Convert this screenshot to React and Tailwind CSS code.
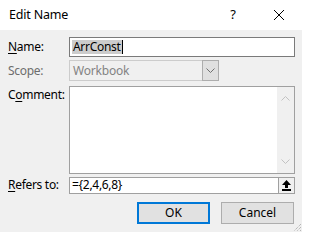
import React from "react";

const font = { fontFamily: '"Noto Sans", "Liberation Sans", sans-serif' };

const Chevron = ({ up, className }) => (
  <svg width="9" height="5" viewBox="0 0 9 5" className={className}>
    <path
      d={up ? "M0.5 4.5 L4.5 0.5 L8.5 4.5" : "M0.5 0.5 L4.5 4.5 L8.5 0.5"}
      fill="none"
      stroke="currentColor"
      strokeWidth="1"
    />
  </svg>
);

const RefArrow = () => (
  <svg width="9" height="11" viewBox="0 0 9 11">
    <path d="M4.5 0 L9 5 L6 5 L6 8 L3 8 L3 5 L0 5 Z" fill="#000" />
    <rect x="0" y="9" width="9" height="2" fill="#000" />
  </svg>
);

const Label = ({ pre, u, post, disabled }) => (
  <div
    className={`w-[69px] shrink-0 pl-[8px] whitespace-nowrap text-[12px] tracking-[-0.3px] ${
      disabled ? "text-[#6d6d6d]" : "text-black"
    }`}
  >
    {pre}
    {u && <span className="underline underline-offset-2">{u}</span>}
    {post}
  </div>
);

export default function App() {
  return (
    <div className="w-[302px] h-[232px] bg-[#f0f0f0] flex flex-col overflow-hidden relative" style={font}>
      {/* title bar */}
      <div className="h-[30px] bg-white flex items-center shrink-0">
        <div className="pl-[9px] text-[12.5px] tracking-[-0.2px] text-black flex-1">Edit Name</div>
        <div className="w-[46px] text-center text-[13px] text-black">?</div>
        <div className="w-[46px] flex justify-center">
          <svg width="10" height="10" viewBox="0 0 10 10">
            <path d="M0 0 L10 10 M10 0 L0 10" stroke="#000" strokeWidth="1" />
          </svg>
        </div>
      </div>

      {/* Name */}
      <div className="flex items-center mt-[7px]">
        <Label u="N" post="ame:" />
        <div className="w-[226px] h-[20px] bg-white border border-[#7a7a7a] flex items-center pl-[2px]">
          <span className="bg-[#cccccc] text-[12px] tracking-[-0.3px] text-black leading-[14px] px-px">ArrConst</span>
          <span className="w-px h-[14px] bg-black" />
        </div>
      </div>

      {/* Scope */}
      <div className="flex items-center mt-[3px]">
        <Label pre="Scope:" disabled />
        <div className="w-[150px] h-[21px] bg-[#f0f0f0] border border-[#cccccc] flex items-center">
          <span className="flex-1 pl-[3px] text-[12px] tracking-[-0.2px] text-[#838383]">Workbook</span>
          <div className="w-[17px] h-[21px] -mr-px -my-px bg-[#e0e0e0] border border-[#adadad] flex items-center justify-center text-[#707070]">
            <Chevron />
          </div>
        </div>
      </div>

      {/* Comment */}
      <div className="flex items-start mt-[5px]">
        <Label pre="C" u="o" post="mment:" />
        <div className="w-[226px] h-[88px] bg-white border border-[#a0a0a0] flex justify-end">
          <div className="w-[17px] h-full bg-[#f0f0f0] flex flex-col items-center justify-between py-[9px] text-[#c2c2c2]">
            <Chevron up />
            <Chevron />
          </div>
        </div>
      </div>

      {/* Refers to */}
      <div className="flex items-center mt-[2px]">
        <Label u="R" post="efers to:" />
        <div className="w-[226px] h-[17px] bg-white border border-[#a0a0a0] flex items-center">
          <span className="flex-1 pl-[2px] text-[12px] tracking-[-0.3px] text-black leading-none">={"{2,4,6,8}"}</span>
          <div className="w-[17px] h-[17px] -mr-px -my-px bg-[#f0f0f0] border border-[#a0a0a0] flex items-center justify-center">
            <RefArrow />
          </div>
        </div>
      </div>

      {/* buttons */}
      <div className="flex justify-end gap-[11px] mt-[8px] pr-[8px]">
        <button className="w-[73px] h-[22px] bg-[#e1e1e1] border-2 border-[#0078d7] text-[12px] text-black">OK</button>
        <button className="w-[73px] h-[22px] bg-[#e1e1e1] border border-[#adadad] text-[12px] text-black">Cancel</button>
      </div>

      {/* size grip */}
      <svg width="10" height="10" viewBox="0 0 10 10" className="absolute right-0 bottom-0">
        <path d="M9 2 L2 9 M9 5 L5 9 M9 8 L8 9" stroke="#a0a0a0" strokeWidth="1" strokeDasharray="1 1" />
      </svg>
    </div>
  );
}
